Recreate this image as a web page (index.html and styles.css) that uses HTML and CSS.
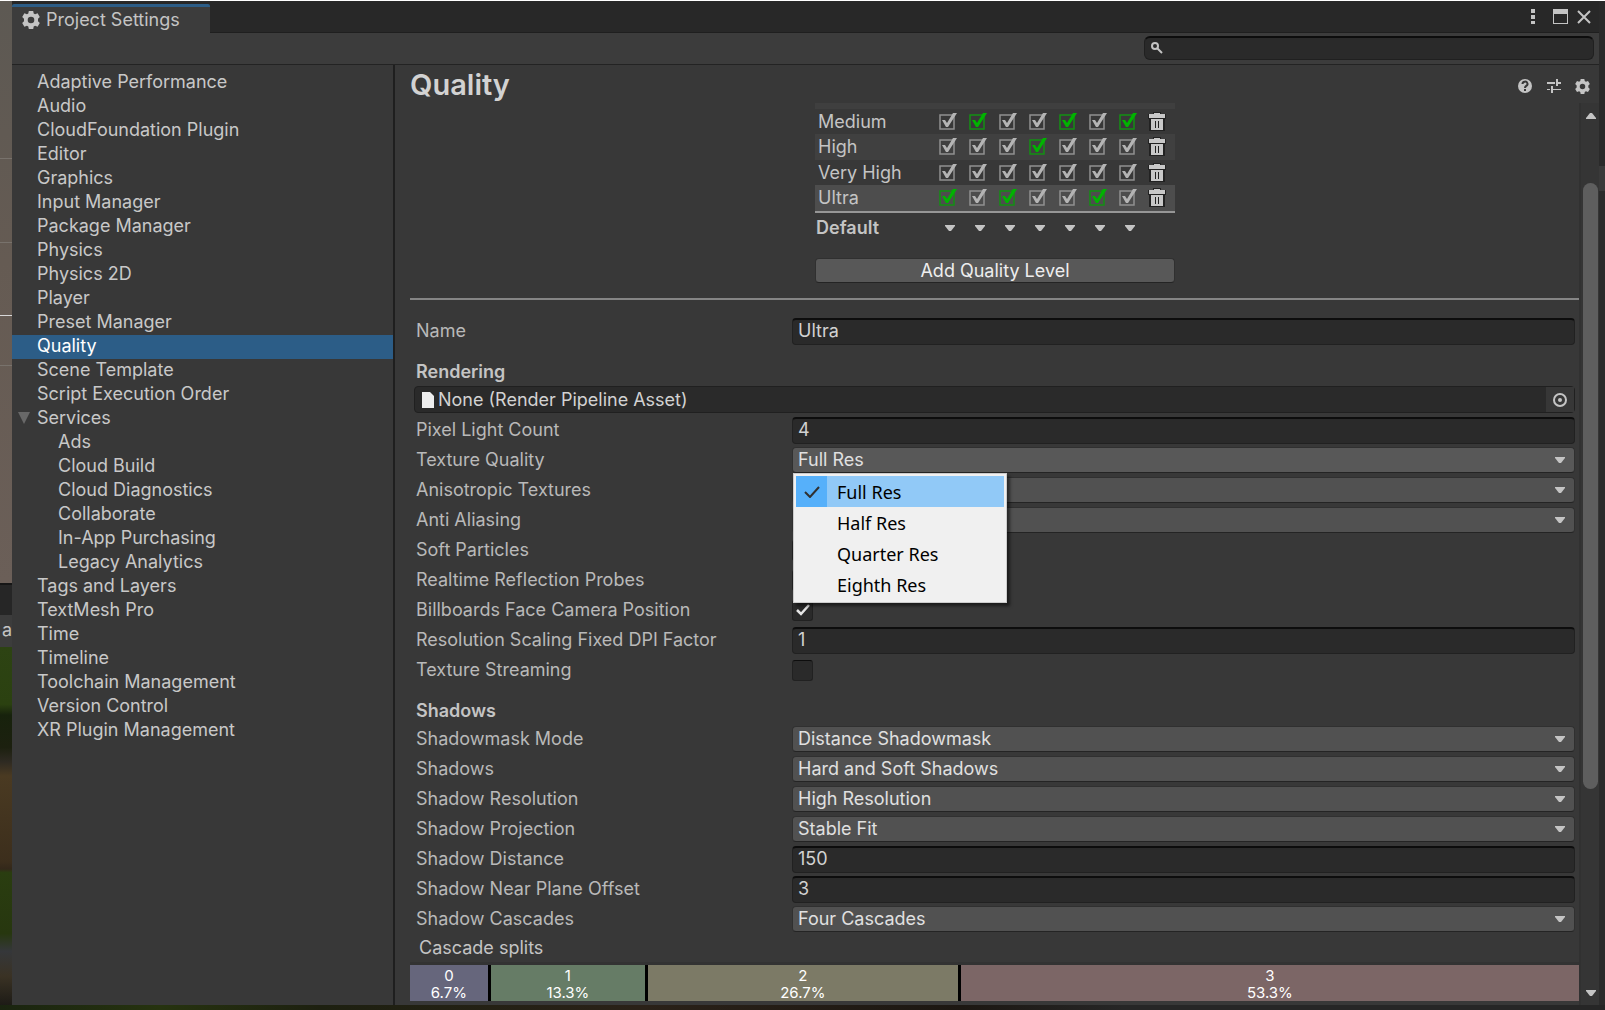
FILE: index.html
```html
<!DOCTYPE html>
<html lang="en">

<head>
    <meta charset="UTF-8">
    <meta name="viewport" content="width=device-width, initial-scale=1.0">
    <title>Project Settings</title>
    <link rel="stylesheet" href="styles.css">
</head>

<body>

    <!-- Shared icon shapes -->
    <svg class="sprite" aria-hidden="true">
        <symbol id="gear" viewBox="0 0 18 18">
            <path fill-rule="evenodd" d="M6.8 0h4.4l.5 2.4 1.4.8 2.5-.9 2.200 3.700L16 7.800v2.400l1.800 1.800-2.200 3.700-2.500-.9-1.400.8-.5 2.400H6.800l-.5-2.400-1.400-.8-2.500.9L.2 12 2 10.200V7.800L.2 6l2.200-3.700 2.500.9 1.400-.8zM9 5.700a3.300 3.300 0 1 0 0 6.600 3.300 3.300 0 0 0 0-6.600z" />
        </symbol>
        <symbol id="trash" viewBox="0 0 20 20">
            <path class="trash-edge" d="M1 2h5V0h8v2h5v5h-1v12H2V7H1z" />
            <path class="trash-body" fill-rule="evenodd" d="M2 3h5V1h6v2h5v3H2zM4 7h12v11H4zM7 9v7h2V9zM11 9v7h2V9z" />
            <path class="trash-body" d="M2 2h16v4H2zM4 8h4v10H4zM9 8h2v10H9zM12 8h4v10h-4zM4 16h12v2H4zM4 7h12v2H4z" />
        </symbol>
        <symbol id="arrow" viewBox="0 0 10 6">
            <path d="M0 0h10v1L6 6H4L0 1z" />
        </symbol>
    </svg>

    <div class="desktop">
        <div class="scene" aria-hidden="true">
            <div class="scene-view"></div>
            <div class="scene-tab"></div>
            <div class="scene-bar">a</div>
            <div class="scene-game"></div>
        </div>

        <div class="window">
            <div class="tab-bar">
                <div class="tab">
                    <svg class="tab-icon"><use href="#gear" /></svg>
                    <span>Project Settings</span>
                </div>
                <div class="window-buttons">
                    <button aria-label="Menu"><svg width="16" height="18"><path d="M6 1h4v4H6zM6 7h4v4H6zM6 13h4v3H6z" /></svg></button>
                    <button aria-label="Maximize"><svg width="16" height="18"><path fill-rule="evenodd" d="M0 1h15v15H0zM1 6v9h13V6z" /></svg></button>
                    <button aria-label="Close"><svg width="16" height="18"><path class="stroke" d="M1 3l12 12M13 3L1 15" /></svg></button>
                </div>
            </div>

            <div class="toolbar">
                <label class="search">
                    <svg width="12" height="12"><circle class="thin" cx="4" cy="4" r="3" /><path class="stroke" d="M6 6l5 5" /></svg>
                    <input type="text" aria-label="Search settings">
                </label>
            </div>

            <div class="body">
                <nav class="sidebar">
                    <a href="#">Adaptive Performance</a>
                    <a href="#">Audio</a>
                    <a href="#">CloudFoundation Plugin</a>
                    <a href="#">Editor</a>
                    <a href="#">Graphics</a>
                    <a href="#">Input Manager</a>
                    <a href="#">Package Manager</a>
                    <a href="#">Physics</a>
                    <a href="#">Physics 2D</a>
                    <a href="#">Player</a>
                    <a href="#">Preset Manager</a>
                    <a href="#" class="selected">Quality</a>
                    <a href="#">Scene Template</a>
                    <a href="#">Script Execution Order</a>
                    <a href="#" class="group"><svg width="12" height="12"><path d="M0 0h12L6 12z" /></svg>Services</a>
                    <a href="#" class="child">Ads</a>
                    <a href="#" class="child">Cloud Build</a>
                    <a href="#" class="child">Cloud Diagnostics</a>
                    <a href="#" class="child">Collaborate</a>
                    <a href="#" class="child">In-App Purchasing</a>
                    <a href="#" class="child">Legacy Analytics</a>
                    <a href="#">Tags and Layers</a>
                    <a href="#">TextMesh Pro</a>
                    <a href="#">Time</a>
                    <a href="#">Timeline</a>
                    <a href="#">Toolchain Management</a>
                    <a href="#">Version Control</a>
                    <a href="#">XR Plugin Management</a>
                </nav>

                <main class="panel">
                    <header class="panel-header">
                        <h1>Quality</h1>
                        <div class="panel-buttons">
                            <button aria-label="Help"><svg width="16" height="16"><circle cx="8" cy="8" r="7" /><path class="cutout" d="M5.500 6a2.500 2.300 0 1 1 3.600 2Q8 8.600 8 10M8 11v2" /></svg></button>
                            <button aria-label="Presets"><svg width="16" height="16"><path d="M1 4h8v2H1zM10 1h2v3h3v2h-3v2h-2zM1 11h3v1H1zM5 8h2v3h8v1H7v3H5z" /></svg></button>
                            <button aria-label="Options"><svg width="15" height="15"><use href="#gear" /></svg></button>
                        </div>
                    </header>

                    <div class="scroll-area">
                        <div class="content">
                            <table class="levels">
                                <tbody id="levels"></tbody>
                                <tfoot>
                                    <tr>
                                        <th scope="row">Default</th>
                                        <td><button aria-label="Default 1"><svg><use href="#arrow" /></svg></button></td>
                                        <td><button aria-label="Default 2"><svg><use href="#arrow" /></svg></button></td>
                                        <td><button aria-label="Default 3"><svg><use href="#arrow" /></svg></button></td>
                                        <td><button aria-label="Default 4"><svg><use href="#arrow" /></svg></button></td>
                                        <td><button aria-label="Default 5"><svg><use href="#arrow" /></svg></button></td>
                                        <td><button aria-label="Default 6"><svg><use href="#arrow" /></svg></button></td>
                                        <td><button aria-label="Default 7"><svg><use href="#arrow" /></svg></button></td>
                                        <td></td>
                                    </tr>
                                </tfoot>
                            </table>
                            <button class="add-level">Add Quality Level</button>
                            <hr>

                            <div class="section">
                                <div class="row">
                                    <label for="name">Name</label>
                                    <input type="text" id="name" value="Ultra">
                                </div>
                            </div>

                            <div class="section">
                                <h2>Rendering</h2>
                                <div class="object-field">
                                    <svg width="12" height="16"><path d="M0 0h8l4 4v12H0z" /></svg>
                                    <span>None (Render Pipeline Asset)</span>
                                    <button aria-label="Select asset"><svg width="16" height="16"><circle class="ring" cx="8" cy="8" r="6" /><circle cx="8" cy="8" r="2" /></svg></button>
                                </div>
                                <div class="row">
                                    <label for="lights">Pixel Light Count</label>
                                    <input type="text" id="lights" value="4">
                                </div>
                                <div class="row">
                                    <label for="texture">Texture Quality</label>
                                    <div class="popup-anchor">
                                        <select id="texture" class="hover"><option>Full Res</option></select>
                                        <ul class="popup" role="listbox" aria-label="Texture Quality">
                                            <li role="option" aria-selected="true" class="picked"><span class="tick"><svg width="16" height="12"><path d="M1 6l5 5 9-10" /></svg></span>Full Res</li>
                                            <li role="option"><span class="tick"></span>Half Res</li>
                                            <li role="option"><span class="tick"></span>Quarter Res</li>
                                            <li role="option"><span class="tick"></span>Eighth Res</li>
                                        </ul>
                                    </div>
                                </div>
                                <div class="row">
                                    <label for="aniso">Anisotropic Textures</label>
                                    <select id="aniso"><option></option></select>
                                </div>
                                <div class="row">
                                    <label for="aa">Anti Aliasing</label>
                                    <select id="aa"><option></option></select>
                                </div>
                                <div class="row">
                                    <label for="soft">Soft Particles</label>
                                    <input type="checkbox" id="soft">
                                </div>
                                <div class="row">
                                    <label for="probes">Realtime Reflection Probes</label>
                                    <input type="checkbox" id="probes">
                                </div>
                                <div class="row">
                                    <label for="billboards">Billboards Face Camera Position</label>
                                    <input type="checkbox" id="billboards" checked>
                                </div>
                                <div class="row">
                                    <label for="dpi">Resolution Scaling Fixed DPI Factor</label>
                                    <input type="text" id="dpi" value="1">
                                </div>
                                <div class="row">
                                    <label for="streaming">Texture Streaming</label>
                                    <input type="checkbox" id="streaming">
                                </div>
                            </div>

                            <div class="section">
                                <h2>Shadows</h2>
                                <div class="row">
                                    <label for="shadowmask">Shadowmask Mode</label>
                                    <select id="shadowmask"><option>Distance Shadowmask</option></select>
                                </div>
                                <div class="row">
                                    <label for="shadows">Shadows</label>
                                    <select id="shadows"><option>Hard and Soft Shadows</option></select>
                                </div>
                                <div class="row">
                                    <label for="resolution">Shadow Resolution</label>
                                    <select id="resolution"><option>High Resolution</option></select>
                                </div>
                                <div class="row">
                                    <label for="projection">Shadow Projection</label>
                                    <select id="projection"><option>Stable Fit</option></select>
                                </div>
                                <div class="row">
                                    <label for="distance">Shadow Distance</label>
                                    <input type="text" id="distance" value="150">
                                </div>
                                <div class="row">
                                    <label for="offset">Shadow Near Plane Offset</label>
                                    <input type="text" id="offset" value="3">
                                </div>
                                <div class="row">
                                    <label for="cascades">Shadow Cascades</label>
                                    <select id="cascades"><option>Four Cascades</option></select>
                                </div>
                            </div>

                            <div class="splits-label">Cascade splits</div>
                            <div class="splits">
                                <div class="split split-0" style="flex-grow: 6.7">0<br>6.7%</div>
                                <div class="split split-1" style="flex-grow: 13.3">1<br>13.3%</div>
                                <div class="split split-2" style="flex-grow: 26.7">2<br>26.7%</div>
                                <div class="split split-3" style="flex-grow: 53.3">3<br>53.3%</div>
                            </div>
                        </div>

                        <div class="scrollbar">
                            <button class="up" aria-label="Scroll up"><svg><use href="#arrow" /></svg></button>
                            <div class="track"><div class="thumb"></div></div>
                            <button aria-label="Scroll down"><svg><use href="#arrow" /></svg></button>
                        </div>
                    </div>
                </main>
            </div>
        </div>

        <div class="edge" aria-hidden="true"></div>
    </div>

    <script>
        // Quality levels, with the platforms that use each one as default
        const levels = [
            { name: 'Medium', defaults: [1, 4, 6] },
            { name: 'High', defaults: [3] },
            { name: 'Very High', defaults: [] },
            { name: 'Ultra', defaults: [0, 2, 5], active: true }
        ];

        // Build one table row per level
        document.getElementById('levels').innerHTML = levels.map(level => {
            let cells = '';
            for (let i = 0; i < 7; i++) {
                const cls = level.defaults.includes(i) ? 'default' : '';
                cells += `<td><input type="checkbox" class="${cls}" aria-label="${level.name} ${i + 1}" checked></td>`;
            }
            return `<tr class="${level.active ? 'active' : ''}"><th scope="row">${level.name}</th>${cells}
                <td><button aria-label="Delete ${level.name}"><svg class="trash"><use href="#trash" /></svg></button></td></tr>`;
        }).join('');
    </script>

</body>

</html>
```
FILE: styles.css
```css
* {
    box-sizing: border-box;
}

body {
    margin: 0;
    background-color: #232323;
    color: #c4c4c4;
    font-family: 'Inter', sans-serif;
    font-size: 18px;
    line-height: 24px;
}

button,
input,
select {
    font: inherit;
    color: inherit;
    margin: 0;
}

button {
    display: flex;
    align-items: center;
    justify-content: center;
    padding: 0;
    border: none;
    background: none;
}

svg {
    display: block;
    flex: none;
    fill: #c4c4c4;
}

.sprite {
    position: absolute;
    width: 0;
    height: 0;
}

.stroke,
.thin,
.ring {
    fill: none;
    stroke: #c4c4c4;
    stroke-width: 2;
}

/* Desktop behind the window */
.desktop {
    display: grid;
    grid-template-columns: 12px 1fr 6px;
    height: 100vh;
    padding-bottom: 5px;
    border-top: 1px solid #fff;
    background: linear-gradient(90deg, #1a2410, #26330f 10%, #1d2010 20%, #2a2118 40%, #1c1712 60%, #262626 70%) bottom / 100% 5px no-repeat;
}

.scene {
    display: flex;
    flex-direction: column;
    overflow: hidden;
}

.scene-view {
    flex: 583;
    background:
        linear-gradient(#d8d8d8, #d8d8d8) 0 314px / 100% 1px no-repeat,
        linear-gradient(#78726c, #78726c) 0 157px / 100% 1px no-repeat,
        linear-gradient(#78726c, #78726c) 0 241px / 100% 1px no-repeat,
        linear-gradient(#78726c, #78726c) 0 364px / 100% 1px no-repeat,
        linear-gradient(#5d5953, #655b53 45%, #6b5f58);
}

.scene-tab {
    height: 32px;
    border-top: 2px solid #161616;
    background-color: #262626;
}

.scene-bar {
    height: 32px;
    padding-left: 2px;
    background-color: #3c3c3c;
    line-height: 30px;
}

.scene-game {
    flex: 358;
    background: linear-gradient(#2d4313, #2b4110 16%, #17220c 19%, #1c200f 28%, #2e2a22 32%, #4a3a22 36%, #3c2e1c 60%, #33281a 62%, #2a3d10 63%, #27370f 80%, #35373a 85%, #3a3224 92%, #1d1b16);
}

.edge {
    background: linear-gradient(#2a2a2a 165px, #3a3a3a 165px, #3a3a3a 190px, #2b2b2b 190px);
}

/* Window frame */
.window {
    display: flex;
    flex-direction: column;
    min-width: 0;
    min-height: 0;
    background-color: #383838;
}

.tab-bar {
    display: flex;
    justify-content: space-between;
    height: 32px;
    padding-top: 3px;
    background-color: #282828;
    box-shadow: inset 0 -1px #1f1f1f;
}

.tab {
    display: flex;
    align-items: center;
    gap: 6px;
    width: 198px;
    padding-left: 10px;
    border-top: 3px solid #2c5d87;
    border-radius: 2px 2px 0 0;
    background-color: #3c3c3c;
}

.tab-icon {
    width: 18px;
    height: 18px;
}

.window-buttons {
    display: flex;
    align-items: center;
    gap: 8px;
    padding: 0 6px 4px 0;
}

.window-buttons button:first-child {
    margin-right: 4px;
}

.toolbar {
    display: flex;
    justify-content: flex-end;
    align-items: center;
    height: 32px;
    padding: 0 5px 2px 0;
    border-bottom: 1px solid #232323;
    background-color: #3c3c3c;
}

.search {
    display: flex;
    align-items: center;
    width: 450px;
    height: 24px;
    padding-left: 6px;
    border: 1px solid #202020;
    border-top: 2px solid #0d0d0d;
    border-radius: 6px;
    background-color: #2a2a2a;
}

.search input {
    flex: 1;
    min-width: 0;
    border: none;
    background: none;
}

.body {
    display: flex;
    flex: 1;
    min-height: 0;
}

/* Category list */
.sidebar {
    width: 383px;
    padding-top: 6px;
    border-right: 2px solid #1f1f1f;
}

.sidebar a {
    display: flex;
    align-items: center;
    height: 24px;
    padding: 0 0 2px 25px;
    color: #c8c8c8;
    text-decoration: none;
}

.sidebar a.selected {
    background-color: #2c5d87;
    color: #fff;
}

.sidebar a.child {
    padding-left: 46px;
}

.sidebar a.group {
    gap: 7px;
    padding-left: 6px;
}

.group svg {
    fill: #686868;
}

/* Quality panel */
.panel {
    display: flex;
    flex-direction: column;
    flex: 1;
    min-width: 0;
}

.panel-header {
    display: flex;
    justify-content: space-between;
    align-items: center;
    height: 38px;
    padding: 2px 9px 0 15px;
}

h1 {
    margin: 0;
    color: #d2d2d2;
    font-size: 29px;
    font-weight: 600;
    line-height: 32px;
}

.panel-buttons {
    display: flex;
    align-items: center;
    gap: 13px;
    padding-top: 2px;
}

.cutout {
    fill: none;
    stroke: #383838;
    stroke-width: 2;
}

.scroll-area {
    display: flex;
    flex: 1;
    min-height: 0;
}

.content {
    flex: 1;
    min-width: 0;
    padding-left: 15px;
    overflow: hidden;
}

/* Quality level matrix */
.levels {
    width: 360px;
    margin-left: 405px;
    border-top: 6px solid #3f3f3f;
    border-spacing: 0;
    table-layout: fixed;
}

.levels th {
    width: 117px;
    padding: 0 0 0 3px;
    font-weight: 400;
    text-align: left;
}

.levels td {
    width: 30px;
    padding: 0;
}

.levels td:last-child {
    width: auto;
}

.levels tr {
    height: 25px;
}

.levels tbody tr:nth-child(even) {
    height: 26px;
    background-color: #404040;
}

.levels tbody tr.active {
    background-color: #4d4d4d;
}

.levels input {
    display: block;
    appearance: none;
    width: 19px;
    height: 18px;
    margin-left: 7px;
    background: url("data:image/svg+xml,%3Csvg xmlns='http://www.w3.org/2000/svg' width='19' height='18'%3E%3Cpath d='M1 2h14v14H1z' fill='none' stroke='%23909090' stroke-width='1.500'/%3E%3Cpath d='M3 7l3 0 2 3 6-10h4L9 14H7z' fill='%23b4b4b4'/%3E%3C/svg%3E");
}

.levels input.default {
    background-image: url("data:image/svg+xml,%3Csvg xmlns='http://www.w3.org/2000/svg' width='19' height='18'%3E%3Cpath d='M1 2h14v14H1z' fill='none' stroke='%23139013' stroke-width='1.500'/%3E%3Cpath d='M3 7l3 0 2 3 6-10h4L9 14H7z' fill='%2300b400'/%3E%3C/svg%3E");
}

.trash {
    width: 20px;
    height: 20px;
}

.levels button {
    width: 30px;
    height: 20px;
}

.trash-edge {
    fill: #222;
}

.trash-body {
    fill: #c8c8c8;
}

.levels tfoot tr {
    height: 32px;
}

.levels tfoot th,
.levels tfoot td {
    border-top: 2px solid #969696;
}

.levels tfoot th {
    padding-left: 1px;
    font-weight: 600;
}

.levels tfoot button {
    padding-left: 6px;
}

.levels tfoot svg,
.scrollbar svg {
    width: 10px;
    height: 6px;
}

.add-level {
    width: 360px;
    height: 25px;
    margin: 15px 0 0 405px;
    border: 1px solid #303030;
    border-bottom-color: #242424;
    border-radius: 4px;
    background-color: #585858;
    color: #eee;
}

hr {
    height: 2px;
    margin: 15px 0 16px;
    border: none;
    background-color: #858585;
}

/* Property rows */
.section {
    padding: 0 4px;
}

.section + .section {
    margin-top: 13px;
}

h2 {
    margin: 0;
    padding-left: 2px;
    font-size: 18px;
    font-weight: 600;
    line-height: 26px;
}

.row {
    display: grid;
    grid-template-columns: 378px 1fr;
    align-items: center;
    height: 30px;
}

.row label {
    padding-left: 2px;
    color: #b9b9b9;
}

.row input[type="text"] {
    width: 100%;
    height: 27px;
    padding: 0 5px 2px;
    border: 1px solid #212121;
    border-top: 2px solid #0d0d0d;
    border-radius: 4px;
    background-color: #2a2a2a;
    color: #d2d2d2;
}

.row input[type="checkbox"] {
    appearance: none;
    width: 21px;
    height: 21px;
    border: 1px solid #212121;
    border-top-color: #0d0d0d;
    border-radius: 3px;
    background-color: #2a2a2a;
}

.row input[type="checkbox"]:checked {
    background-image: url("data:image/svg+xml,%3Csvg xmlns='http://www.w3.org/2000/svg' width='19' height='19'%3E%3Cpath d='M4 9l4 4 8-9' fill='none' stroke='%23e4e4e4' stroke-width='2.500'/%3E%3C/svg%3E");
}

.row select {
    display: block;
    appearance: none;
    width: 100%;
    height: 26px;
    padding: 0 5px;
    border: 1px solid #303030;
    border-bottom-color: #242424;
    border-radius: 4px;
    background: #515151 url("data:image/svg+xml,%3Csvg xmlns='http://www.w3.org/2000/svg' width='10' height='6'%3E%3Cpath d='M0 0h10v1L6 6H4L0 1z' fill='%23c4c4c4'/%3E%3C/svg%3E") right 9px center no-repeat;
    color: #e0e0e0;
}

.row select.hover {
    background-color: #585858;
}

.object-field {
    display: flex;
    align-items: center;
    gap: 4px;
    height: 27px;
    margin: 1px 0 2px;
    padding-left: 7px;
    border: 1px solid #202020;
    border-radius: 4px;
    background-color: #2a2a2a;
    color: #d2d2d2;
}

.object-field > svg {
    fill: #eee;
}

.object-field button {
    width: 28px;
    height: 25px;
    margin-left: auto;
    background-color: #373737;
}

/* Open drop-down list */
.popup-anchor {
    position: relative;
}

.popup {
    position: absolute;
    top: 26px;
    left: 1px;
    z-index: 1;
    width: 214px;
    margin: 0;
    padding: 2px;
    border: 1px solid #ccc;
    background-color: #f0f0f0;
    box-shadow: 3px 3px 3px rgba(0, 0, 0, 0.5);
    color: #000;
    font-family: 'Noto Sans', sans-serif;
    list-style: none;
}

.popup li {
    display: flex;
    align-items: center;
    gap: 10px;
    height: 31px;
}

.popup .picked {
    background-color: #91c9f7;
}

.tick {
    display: flex;
    align-items: center;
    justify-content: center;
    width: 31px;
    height: 31px;
}

.picked .tick {
    background-color: #56b0fa;
}

.tick path {
    fill: none;
    stroke: #303030;
    stroke-width: 2;
}

/* Cascade splits */
.splits-label {
    padding: 2px 9px;
}

.splits {
    display: flex;
    gap: 3px;
    height: 39px;
    border-top: 3px solid #333;
    background-color: #000;
}

.split {
    flex-basis: 0;
    padding-top: 2px;
    color: #fff;
    font-size: 15px;
    line-height: 17px;
    text-align: center;
}

.split-0 {
    background-color: #66667c;
}

.split-1 {
    background-color: #667c66;
}

.split-2 {
    background-color: #7c7a66;
}

.split-3 {
    background-color: #7c6666;
}

/* Scrollbar */
.scrollbar {
    display: flex;
    flex-direction: column;
    width: 20px;
    border-left: 2px solid #313131;
    background-color: #353535;
}

.scrollbar button {
    height: 24px;
    padding-left: 1px;
}

.scrollbar .up {
    padding-top: 1px;
}

.scrollbar .up svg {
    transform: rotate(180deg);
}

.track {
    flex: 1;
    padding: 56px 1px 0 2px;
}

.thumb {
    height: 76%;
    border-radius: 8px;
    background-color: #5e5e5e;
}
```
